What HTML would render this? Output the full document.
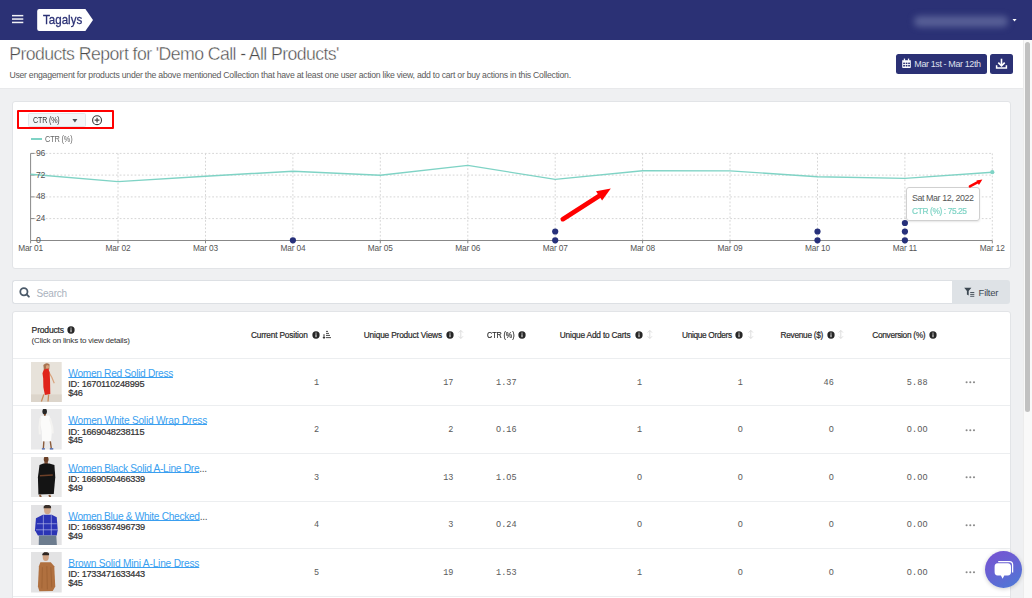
<!DOCTYPE html>
<html><head><meta charset="utf-8">
<style>
*{box-sizing:border-box;margin:0;padding:0}
html,body{width:1032px;height:598px;overflow:hidden;background:#eff0f2;font-family:"Liberation Sans",sans-serif;color:#333}
.a{position:absolute}
.t{position:absolute;white-space:nowrap;line-height:1}
.card{position:absolute;background:#fff;border:1px solid #e2e4e7;border-radius:3px}
.mono{font-family:"Liberation Mono",monospace;color:#5a5a5a}
</style></head><body>
<div class="a" style="left:0;top:0;width:1032px;height:39.5px;background:#2b3175"></div>
<svg class="a" style="left:10px;top:12px" width="16" height="14" viewBox="10 12 16 14"><g fill="#f2f2f6"><rect x="12" y="14.9" width="11.3" height="1.5"/><rect x="12" y="18.3" width="11.3" height="1.5"/><rect x="12" y="21.7" width="11.3" height="1.5"/></g></svg>
<svg class="a" style="left:0;top:0" width="100" height="40" viewBox="0 0 100 40"><path d="M39.2 8.9 H85.4 L93 19.9 L85.4 30.9 H39.2 Q37.2 30.9 37.2 28.9 V10.9 Q37.2 8.9 39.2 8.9 Z" fill="#fff"/></svg>
<div class="t" style="left:42.6px;top:12.69px;font-size:13.3px;transform:scaleX(0.87);transform-origin:0 0;color:#2b3175;letter-spacing:0px;-webkit-text-stroke:0.3px #2b3175">Tagalys</div>
<div class="a" style="left:914px;top:15.5px;width:94px;height:11px;background:#575f96;border-radius:5px;filter:blur(3px)"></div>
<svg class="a" style="left:1010px;top:16px" width="10" height="8"><path d="M2.5 3 L6.6 3 L4.55 5.4 Z" fill="#fff"/></svg>
<div class="a" style="left:0;top:39.5px;width:1023px;height:49px;background:#fff;border-bottom:1px solid #e8e9eb"></div>
<div class="t" style="left:9.3px;top:46.44px;font-size:17.7px;color:#4a4a4a;letter-spacing:-0.59px;-webkit-text-stroke:0.4px #fff">Products Report for 'Demo Call - All Products'</div>
<div class="t" style="left:9.4px;top:71.12px;font-size:8.7px;color:#5a5a5a;letter-spacing:-0.255px">User engagement for products under the above mentioned Collection that have at least one user action like view, add to cart or buy actions in this Collection.</div>
<div class="a" style="left:896px;top:54px;width:91px;height:20px;background:#2b3175;border-radius:2.5px"></div>
<div class="a" style="left:990.4px;top:54px;width:22.5px;height:20px;background:#2b3175;border-radius:2.5px"></div>
<svg class="a" style="left:900px;top:57px" width="14" height="13" viewBox="900 57 14 13">
<path d="M902.2 60.3 H910.8 V67.2 Q910.8 68 910 68 H903 Q902.2 68 902.2 67.2 Z" fill="#fff"/>
<rect x="903.8" y="58.6" width="1.3" height="2.2" fill="#fff"/><rect x="907.9" y="58.6" width="1.3" height="2.2" fill="#fff"/>
<g fill="#2b3175"><rect x="903.2" y="62.6" width="1.7" height="1.5"/><rect x="905.7" y="62.6" width="1.7" height="1.5"/><rect x="908.2" y="62.6" width="1.7" height="1.5"/>
<rect x="903.2" y="65" width="1.7" height="1.5"/><rect x="905.7" y="65" width="1.7" height="1.5"/><rect x="908.2" y="65" width="1.7" height="1.5"/></g>
</svg>
<div class="t" style="left:914.3px;top:59.97px;font-size:9px;color:#dfe0ec;letter-spacing:-0.4px">Mar 1st - Mar 12th</div>
<svg class="a" style="left:994px;top:57px" width="15" height="14" viewBox="994 57 15 14">
<path d="M1001.5 58.7 V65" stroke="#fff" stroke-width="1.6" fill="none"/>
<path d="M998.3 62.6 L1001.5 65.8 L1004.7 62.6" stroke="#fff" stroke-width="1.6" fill="none"/>
<path d="M996.6 65.2 V68.1 H1006.4 V65.2" stroke="#fff" stroke-width="1.5" fill="none"/>
</svg>
<div class="card" style="left:12px;top:100.6px;width:998.5px;height:168px"></div>
<div class="a" style="left:17.2px;top:109.7px;width:96.8px;height:19.7px;border:2px solid #f00;border-radius:1px"></div>
<div class="a" style="left:27.9px;top:113.3px;width:57.8px;height:13.3px;background:#f3f6f8;border:1px solid #e2e5e9;border-radius:1.5px"></div>
<div class="t" style="left:33.3px;top:115.94px;font-size:8.6px;transform:scaleX(0.83);transform-origin:0 0;color:#333;letter-spacing:-0.2px">CTR (%)</div>
<svg class="a" style="left:70px;top:116px" width="10" height="8"><path d="M2.4 3.1 L7.4 3.1 L4.9 6.4 Z" fill="#4a4f57"/></svg>
<svg class="a" style="left:90px;top:113px" width="14" height="14" viewBox="90 113 14 14"><circle cx="97.05" cy="120.2" r="4.45" stroke="#3a3a3a" stroke-width="1.1" fill="none"/><path d="M97.05 117.8 V122.6 M94.65 120.2 H99.45" stroke="#444" stroke-width="1.2"/></svg>
<div class="a" style="left:30.8px;top:138px;width:11.2px;height:2px;background:#7fd3c5"></div>
<div class="t" style="left:44.9px;top:134.82px;font-size:8.7px;transform:scaleX(0.85);transform-origin:0 0;color:#666;letter-spacing:-0.2px">CTR (%)</div>
<svg class="a" style="left:0;top:0" width="1032" height="270" viewBox="0 0 1032 270">
<path d="M34.6 153.4 H992.3" stroke="#d6d6d6" stroke-width="1" stroke-dasharray="1.8 1.9"/>
<path d="M34.6 175.1 H992.3" stroke="#d6d6d6" stroke-width="1" stroke-dasharray="1.8 1.9"/>
<path d="M34.6 196.9 H992.3" stroke="#d6d6d6" stroke-width="1" stroke-dasharray="1.8 1.9"/>
<path d="M34.6 218.6 H992.3" stroke="#d6d6d6" stroke-width="1" stroke-dasharray="1.8 1.9"/>
<path d="M118.0 153.4 V240.5" stroke="#d6d6d6" stroke-width="1" stroke-dasharray="1.8 1.9"/>
<path d="M205.5 153.4 V240.5" stroke="#d6d6d6" stroke-width="1" stroke-dasharray="1.8 1.9"/>
<path d="M292.9 153.4 V240.5" stroke="#d6d6d6" stroke-width="1" stroke-dasharray="1.8 1.9"/>
<path d="M380.3 153.4 V240.5" stroke="#d6d6d6" stroke-width="1" stroke-dasharray="1.8 1.9"/>
<path d="M467.8 153.4 V240.5" stroke="#d6d6d6" stroke-width="1" stroke-dasharray="1.8 1.9"/>
<path d="M555.2 153.4 V240.5" stroke="#d6d6d6" stroke-width="1" stroke-dasharray="1.8 1.9"/>
<path d="M642.6 153.4 V240.5" stroke="#d6d6d6" stroke-width="1" stroke-dasharray="1.8 1.9"/>
<path d="M730.0 153.4 V240.5" stroke="#d6d6d6" stroke-width="1" stroke-dasharray="1.8 1.9"/>
<path d="M817.5 153.4 V240.5" stroke="#d6d6d6" stroke-width="1" stroke-dasharray="1.8 1.9"/>
<path d="M904.9 153.4 V240.5" stroke="#d6d6d6" stroke-width="1" stroke-dasharray="1.8 1.9"/>
<path d="M992.3 153.4 V240.5" stroke="#d6d6d6" stroke-width="1" stroke-dasharray="1.8 1.9"/>
<path d="M30.6 153.4 V240.5 H992.3" stroke="#888" stroke-width="1" fill="none"/>
<path d="M30.6 153.4 H34.6" stroke="#888" stroke-width="1"/>
<path d="M30.6 175.1 H34.6" stroke="#888" stroke-width="1"/>
<path d="M30.6 196.9 H34.6" stroke="#888" stroke-width="1"/>
<path d="M30.6 218.6 H34.6" stroke="#888" stroke-width="1"/>
<path d="M30.6 240.5 V243.3" stroke="#888" stroke-width="1"/>
<path d="M118.0 240.5 V243.3" stroke="#888" stroke-width="1"/>
<path d="M205.5 240.5 V243.3" stroke="#888" stroke-width="1"/>
<path d="M292.9 240.5 V243.3" stroke="#888" stroke-width="1"/>
<path d="M380.3 240.5 V243.3" stroke="#888" stroke-width="1"/>
<path d="M467.8 240.5 V243.3" stroke="#888" stroke-width="1"/>
<path d="M555.2 240.5 V243.3" stroke="#888" stroke-width="1"/>
<path d="M642.6 240.5 V243.3" stroke="#888" stroke-width="1"/>
<path d="M730.0 240.5 V243.3" stroke="#888" stroke-width="1"/>
<path d="M817.5 240.5 V243.3" stroke="#888" stroke-width="1"/>
<path d="M904.9 240.5 V243.3" stroke="#888" stroke-width="1"/>
<path d="M992.3 240.5 V243.3" stroke="#888" stroke-width="1"/>
<path d="M30.6 174.2 L118.0 181.6 L205.5 176.2 L292.9 171.2 L380.3 175.2 L467.8 165.4 L555.2 179.4 L642.6 170.7 L730.0 170.9 L817.5 176.7 L904.9 178.4 L992.3 172.2" stroke="#7fd3c5" stroke-width="1.4" fill="none"/>
<circle cx="992.3" cy="172.2" r="2.1" fill="#7fd3c5"/>
<circle cx="292.9" cy="240.3" r="3.1" fill="#26307a"/>
<circle cx="555.2" cy="231.5" r="3.1" fill="#26307a"/>
<circle cx="555.2" cy="240.3" r="3.1" fill="#26307a"/>
<circle cx="817.5" cy="231.5" r="3.1" fill="#26307a"/>
<circle cx="817.5" cy="240.3" r="3.1" fill="#26307a"/>
<circle cx="904.9" cy="223" r="3.1" fill="#26307a"/>
<circle cx="904.9" cy="231.6" r="3.1" fill="#26307a"/>
<circle cx="904.9" cy="240.3" r="3.1" fill="#26307a"/>
</svg>
<div class="t" style="left:35.9px;top:148.92px;font-size:8.7px;color:#555;letter-spacing:-0.3px">96</div>
<div class="t" style="left:35.9px;top:170.62px;font-size:8.7px;color:#555;letter-spacing:-0.3px">72</div>
<div class="t" style="left:35.9px;top:192.42px;font-size:8.7px;color:#555;letter-spacing:-0.3px">48</div>
<div class="t" style="left:35.9px;top:214.12px;font-size:8.7px;color:#555;letter-spacing:-0.3px">24</div>
<div class="t" style="left:35.9px;top:235.82px;font-size:8.7px;color:#555;letter-spacing:-0.3px">0</div>
<div class="t" style="left:10.6px;width:40px;text-align:center;top:243.98px;font-size:8.3px;color:#555;letter-spacing:-0.15px">Mar 01</div>
<div class="t" style="left:98.0px;width:40px;text-align:center;top:243.98px;font-size:8.3px;color:#555;letter-spacing:-0.15px">Mar 02</div>
<div class="t" style="left:185.5px;width:40px;text-align:center;top:243.98px;font-size:8.3px;color:#555;letter-spacing:-0.15px">Mar 03</div>
<div class="t" style="left:272.9px;width:40px;text-align:center;top:243.98px;font-size:8.3px;color:#555;letter-spacing:-0.15px">Mar 04</div>
<div class="t" style="left:360.3px;width:40px;text-align:center;top:243.98px;font-size:8.3px;color:#555;letter-spacing:-0.15px">Mar 05</div>
<div class="t" style="left:447.8px;width:40px;text-align:center;top:243.98px;font-size:8.3px;color:#555;letter-spacing:-0.15px">Mar 06</div>
<div class="t" style="left:535.2px;width:40px;text-align:center;top:243.98px;font-size:8.3px;color:#555;letter-spacing:-0.15px">Mar 07</div>
<div class="t" style="left:622.6px;width:40px;text-align:center;top:243.98px;font-size:8.3px;color:#555;letter-spacing:-0.15px">Mar 08</div>
<div class="t" style="left:710.0px;width:40px;text-align:center;top:243.98px;font-size:8.3px;color:#555;letter-spacing:-0.15px">Mar 09</div>
<div class="t" style="left:797.5px;width:40px;text-align:center;top:243.98px;font-size:8.3px;color:#555;letter-spacing:-0.15px">Mar 10</div>
<div class="t" style="left:884.9px;width:40px;text-align:center;top:243.98px;font-size:8.3px;color:#555;letter-spacing:-0.15px">Mar 11</div>
<div class="t" style="left:972.3px;width:40px;text-align:center;top:243.98px;font-size:8.3px;color:#555;letter-spacing:-0.15px">Mar 12</div>
<div class="a" style="left:905.8px;top:187.3px;width:73.8px;height:34.1px;background:rgba(255,255,255,.96);border:1px solid #d0d0d0;border-radius:3px;box-shadow:0 1px 2px rgba(0,0,0,.1)"></div>
<div class="t" style="left:911.9px;top:193.99px;font-size:8.9px;color:#555;letter-spacing:-0.4px">Sat Mar 12, 2022</div>
<div class="t" style="left:911.9px;top:207.19px;font-size:8.9px;transform:scaleX(0.945);transform-origin:0 0;color:#7fd3c5;letter-spacing:-0.42px;-webkit-text-stroke:0.2px #7fd3c5">CTR (%) : 75.25</div>
<svg class="a" style="left:0;top:0" width="1032" height="270" viewBox="0 0 1032 270">
<path d="M562.8 219.2 L601 194.8" stroke="#f00" stroke-width="4.6" stroke-linecap="round"/>
<path d="M610.8 188.4 L596 191.3 L602.1 200.6 Z" fill="#f00"/>
<path d="M969.9 186.4 L978.3 181.9" stroke="#f00" stroke-width="2.5" stroke-linecap="round"/>
<path d="M982.4 179.6 L976.4 180.6 L978.9 185.1 Z" fill="#f00"/>
</svg>
<div class="a" style="left:12.3px;top:280.2px;width:940px;height:24.1px;background:#fff;border:1px solid #dde0e4;border-right:none;border-radius:3px 0 0 3px"></div>
<div class="a" style="left:952px;top:280.2px;width:58.4px;height:24.1px;background:#dee2e6;border-radius:0 3px 3px 0"></div>
<svg class="a" style="left:17px;top:285px" width="15" height="15" viewBox="17 285 15 15"><circle cx="23.9" cy="291.7" r="3.6" stroke="#4b5a69" stroke-width="1.8" fill="none"/><path d="M26.6 294.4 L28.9 296.7" stroke="#4b5a69" stroke-width="1.9" stroke-linecap="round"/></svg>
<div class="t" style="left:36.5px;top:288.81px;font-size:10px;color:#aab2bd;letter-spacing:-0.2px">Search</div>
<svg class="a" style="left:962px;top:286px" width="14" height="12" viewBox="962 286 14 12">
<path d="M964.2 287.8 H971.4 L968.7 291 V295.6 L966.9 294.6 V291 Z" fill="#3d4852"/>
<rect x="970.2" y="292" width="4.1" height="0.9" fill="#3d4852"/><rect x="970.2" y="293.9" width="4.1" height="0.9" fill="#3d4852"/><rect x="970.2" y="295.8" width="4.1" height="0.9" fill="#3d4852"/>
</svg>
<div class="t" style="left:978.6px;top:287.79px;font-size:9.5px;color:#3d4852;letter-spacing:-0.25px">Filter</div>
<div class="card" style="left:12px;top:311.3px;width:998.5px;height:320px"></div>
<div class="t" style="left:31.6px;top:325.54px;font-size:8.6px;color:#2a2a2a;letter-spacing:-0.2px;-webkit-text-stroke:0.2px #2a2a2a">Products</div>
<svg class="a" style="left:65.55px;top:324.8px" width="10" height="10" viewBox="65.55 324.8 10 10"><circle cx="70.55" cy="329.8" r="3.65" fill="#262626"/><path d="M70.55 329.1 V332.0" stroke="#fff" stroke-width="0.95"/><circle cx="70.55" cy="327.90000000000003" r="0.6" fill="#fff"/></svg>
<div class="t" style="left:31.6px;top:336.63px;font-size:8px;color:#333;letter-spacing:-0.2px">(Click on links to view details)</div>
<div class="t" style="left:250.9px;top:331.18px;font-size:8.3px;color:#2a2a2a;letter-spacing:-0.17px;-webkit-text-stroke:0.2px #2a2a2a">Current Position</div>
<svg class="a" style="left:310.65px;top:329.8px" width="10" height="10" viewBox="310.65 329.8 10 10"><circle cx="315.65" cy="334.8" r="3.65" fill="#262626"/><path d="M315.65 334.1 V337.0" stroke="#fff" stroke-width="0.95"/><circle cx="315.65" cy="332.90000000000003" r="0.6" fill="#fff"/></svg>
<div class="t" style="left:363.8px;top:331.18px;font-size:8.3px;color:#2a2a2a;letter-spacing:-0.17px;-webkit-text-stroke:0.2px #2a2a2a">Unique Product Views</div>
<svg class="a" style="left:444.6px;top:329.8px" width="10" height="10" viewBox="444.6 329.8 10 10"><circle cx="449.6" cy="334.8" r="3.65" fill="#262626"/><path d="M449.6 334.1 V337.0" stroke="#fff" stroke-width="0.95"/><circle cx="449.6" cy="332.90000000000003" r="0.6" fill="#fff"/></svg>
<svg class="a" style="left:456.1px;top:328px" width="10" height="13" viewBox="456.1 328 10 13"><path d="M460.90000000000003 330.6 V338.3 M458.70000000000005 332.6 L460.90000000000003 330.4 L463.1 332.6 M458.70000000000005 336.3 L460.90000000000003 338.5 L463.1 336.3" stroke="#d9d9d9" stroke-width="0.9" fill="none"/></svg>
<div class="t" style="left:487px;top:331.18px;font-size:8.3px;transform:scaleX(0.87);transform-origin:0 0;color:#2a2a2a;letter-spacing:-0.1px;-webkit-text-stroke:0.2px #2a2a2a">CTR (%)</div>
<svg class="a" style="left:517.1px;top:329.8px" width="10" height="10" viewBox="517.1 329.8 10 10"><circle cx="522.1" cy="334.8" r="3.65" fill="#262626"/><path d="M522.1 334.1 V337.0" stroke="#fff" stroke-width="0.95"/><circle cx="522.1" cy="332.90000000000003" r="0.6" fill="#fff"/></svg>
<div class="t" style="left:559.8px;top:331.18px;font-size:8.3px;color:#2a2a2a;letter-spacing:-0.19px;-webkit-text-stroke:0.2px #2a2a2a">Unique Add to Carts</div>
<svg class="a" style="left:633.7px;top:329.8px" width="10" height="10" viewBox="633.7 329.8 10 10"><circle cx="638.7" cy="334.8" r="3.65" fill="#262626"/><path d="M638.7 334.1 V337.0" stroke="#fff" stroke-width="0.95"/><circle cx="638.7" cy="332.90000000000003" r="0.6" fill="#fff"/></svg>
<svg class="a" style="left:645.1px;top:328px" width="10" height="13" viewBox="645.1 328 10 13"><path d="M649.9 330.6 V338.3 M647.6999999999999 332.6 L649.9 330.4 L652.1 332.6 M647.6999999999999 336.3 L649.9 338.5 L652.1 336.3" stroke="#d9d9d9" stroke-width="0.9" fill="none"/></svg>
<div class="t" style="left:682px;top:331.18px;font-size:8.3px;color:#2a2a2a;letter-spacing:-0.32px;-webkit-text-stroke:0.2px #2a2a2a">Unique Orders</div>
<svg class="a" style="left:734.1px;top:329.8px" width="10" height="10" viewBox="734.1 329.8 10 10"><circle cx="739.1" cy="334.8" r="3.65" fill="#262626"/><path d="M739.1 334.1 V337.0" stroke="#fff" stroke-width="0.95"/><circle cx="739.1" cy="332.90000000000003" r="0.6" fill="#fff"/></svg>
<svg class="a" style="left:746px;top:328px" width="10" height="13" viewBox="746 328 10 13"><path d="M750.8 330.6 V338.3 M748.5999999999999 332.6 L750.8 330.4 L753.0 332.6 M748.5999999999999 336.3 L750.8 338.5 L753.0 336.3" stroke="#d9d9d9" stroke-width="0.9" fill="none"/></svg>
<div class="t" style="left:780.6px;top:331.18px;font-size:8.3px;color:#2a2a2a;letter-spacing:-0.3px;-webkit-text-stroke:0.2px #2a2a2a">Revenue ($)</div>
<svg class="a" style="left:825.6px;top:329.8px" width="10" height="10" viewBox="825.6 329.8 10 10"><circle cx="830.6" cy="334.8" r="3.65" fill="#262626"/><path d="M830.6 334.1 V337.0" stroke="#fff" stroke-width="0.95"/><circle cx="830.6" cy="332.90000000000003" r="0.6" fill="#fff"/></svg>
<svg class="a" style="left:836.2px;top:328px" width="10" height="13" viewBox="836.2 328 10 13"><path d="M841.0 330.6 V338.3 M838.8 332.6 L841.0 330.4 L843.2 332.6 M838.8 336.3 L841.0 338.5 L843.2 336.3" stroke="#d9d9d9" stroke-width="0.9" fill="none"/></svg>
<div class="t" style="left:872.2px;top:331.18px;font-size:8.3px;color:#2a2a2a;letter-spacing:-0.29px;-webkit-text-stroke:0.2px #2a2a2a">Conversion (%)</div>
<svg class="a" style="left:927.6px;top:329.8px" width="10" height="10" viewBox="927.6 329.8 10 10"><circle cx="932.6" cy="334.8" r="3.65" fill="#262626"/><path d="M932.6 334.1 V337.0" stroke="#fff" stroke-width="0.95"/><circle cx="932.6" cy="332.90000000000003" r="0.6" fill="#fff"/></svg>
<svg class="a" style="left:320px;top:329px" width="13" height="11" viewBox="320 329 13 11"><path d="M324 334.2 V338.2" stroke="#333" stroke-width="1"/><path d="M322.5 337 L324 339 L325.5 337 Z" fill="#333"/><g fill="#333"><rect x="326" y="330.9" width="2" height="0.9"/><rect x="326" y="332.9" width="3" height="0.9"/><rect x="326" y="334.9" width="4" height="0.9"/><rect x="326" y="337.2" width="5" height="0.9"/></g></svg>
<div class="a" style="left:13px;top:358.3px;width:996.5px;height:1px;background:#eceef0"></div>
<svg class="a" style="left:31.1px;top:361.7px" width="30.7" height="40.5" viewBox="0 0 31 40" preserveAspectRatio="none"><rect width="31" height="40" fill="#e7e2da"/><rect y="32" width="31" height="8" fill="#dcd5cb"/><path d="M12.5 3 Q15.5 -0.5 18.8 2.5 L18.5 7.5 L13 8 Z" fill="#a87450"/><ellipse cx="16.6" cy="5" rx="1.6" ry="2" fill="#d9a27c"/><path d="M17.4 9 L21 15 L23.5 21" stroke="#d9a27c" stroke-width="1.2" fill="none"/><path d="M13 7.5 L17.5 6.5 L18.8 10 L19.2 17 L19.5 31.5 L14 32.5 L12.5 25 L12.3 16 L11.6 11 Z" fill="#e0241b"/><path d="M13 32 L10.5 39 M17.8 32 L17.2 39" stroke="#c98a5a" stroke-width="1.3"/></svg>
<div class="t" style="left:68.3px;top:368.78px;font-size:10.2px;color:#3a9ff0;letter-spacing:-0.32px"><span style="text-decoration:underline;text-underline-offset:0px;text-decoration-skip-ink:none">Women Red Solid Dress</span></div>
<div class="t" style="left:68.3px;top:379.94px;font-size:9.2px;color:#333;letter-spacing:-0.24px;-webkit-text-stroke:0.22px #333">ID: 1670110248995</div>
<div class="t" style="left:68.3px;top:388.84px;font-size:9.2px;color:#333;letter-spacing:-0.4px;-webkit-text-stroke:0.22px #333">$46</div>
<div class="t mono" style="left:219.15px;width:100px;text-align:right;top:378.50px;font-size:8.5px;letter-spacing:0.1px">1</div>
<div class="t mono" style="left:353.55px;width:100px;text-align:right;top:378.50px;font-size:8.5px;letter-spacing:0.1px">17</div>
<div class="t mono" style="left:416.75px;width:100px;text-align:right;top:378.50px;font-size:8.5px;letter-spacing:0.1px">1.37</div>
<div class="t mono" style="left:542.25px;width:100px;text-align:right;top:378.50px;font-size:8.5px;letter-spacing:0.1px">1</div>
<div class="t mono" style="left:642.85px;width:100px;text-align:right;top:378.50px;font-size:8.5px;letter-spacing:0.1px">1</div>
<div class="t mono" style="left:733.95px;width:100px;text-align:right;top:378.50px;font-size:8.5px;letter-spacing:0.1px">46</div>
<div class="t mono" style="left:827.65px;width:100px;text-align:right;top:378.50px;font-size:8.5px;letter-spacing:0.1px">5.88</div>
<svg class="a" style="left:964px;top:378.0px" width="13" height="8" viewBox="0 0 13 8"><g fill="#8a8a8a"><circle cx="2.6" cy="4.2" r="1.05"/><circle cx="6.3" cy="4.2" r="1.05"/><circle cx="10" cy="4.2" r="1.05"/></g></svg>
<div class="a" style="left:13px;top:405.3px;width:996.5px;height:1px;background:#eceef0"></div>
<svg class="a" style="left:31.1px;top:409.3px" width="30.7" height="40.5" viewBox="0 0 31 40" preserveAspectRatio="none"><rect width="31" height="40" fill="#e9e9ea"/><ellipse cx="13.8" cy="2.4" rx="2.3" ry="2.9" fill="#262626"/><path d="M13 5 L15 5 L14.8 7 L13.2 7 Z" fill="#7a4a2a"/><path d="M9.8 7 L18.5 6.5 L20.5 13 L21.2 21 L20.3 31.5 L11.2 32 L10.8 22 L9.2 14 Z" fill="#fbfbfa"/><path d="M9.5 9 L8.5 18 L9 25 M19 9 L21.5 18 L22 24" stroke="#f4f3f1" stroke-width="2" fill="none"/><path d="M13 32 L12.5 38.8 M19.5 32 L20.5 38.8" stroke="#8a5a3a" stroke-width="1.4"/><path d="M11 39.4 H14 M19 39.4 H22.5" stroke="#3b5ba8" stroke-width="1.1"/></svg>
<div class="t" style="left:68.3px;top:416.38px;font-size:10.2px;color:#3a9ff0;letter-spacing:-0.25px"><span style="text-decoration:underline;text-underline-offset:0px;text-decoration-skip-ink:none">Women White Solid Wrap Dress</span></div>
<div class="t" style="left:68.3px;top:427.54px;font-size:9.2px;color:#333;letter-spacing:-0.24px;-webkit-text-stroke:0.22px #333">ID: 1669048238115</div>
<div class="t" style="left:68.3px;top:436.44px;font-size:9.2px;color:#333;letter-spacing:-0.4px;-webkit-text-stroke:0.22px #333">$45</div>
<div class="t mono" style="left:219.15px;width:100px;text-align:right;top:426.10px;font-size:8.5px;letter-spacing:0.1px">2</div>
<div class="t mono" style="left:353.55px;width:100px;text-align:right;top:426.10px;font-size:8.5px;letter-spacing:0.1px">2</div>
<div class="t mono" style="left:416.75px;width:100px;text-align:right;top:426.10px;font-size:8.5px;letter-spacing:0.1px">O.16</div>
<div class="t mono" style="left:542.25px;width:100px;text-align:right;top:426.10px;font-size:8.5px;letter-spacing:0.1px">1</div>
<div class="t mono" style="left:642.85px;width:100px;text-align:right;top:426.10px;font-size:8.5px;letter-spacing:0.1px">O</div>
<div class="t mono" style="left:733.95px;width:100px;text-align:right;top:426.10px;font-size:8.5px;letter-spacing:0.1px">O</div>
<div class="t mono" style="left:827.65px;width:100px;text-align:right;top:426.10px;font-size:8.5px;letter-spacing:0.1px">O.OO</div>
<svg class="a" style="left:964px;top:425.6px" width="13" height="8" viewBox="0 0 13 8"><g fill="#8a8a8a"><circle cx="2.6" cy="4.2" r="1.05"/><circle cx="6.3" cy="4.2" r="1.05"/><circle cx="10" cy="4.2" r="1.05"/></g></svg>
<div class="a" style="left:13px;top:452.9px;width:996.5px;height:1px;background:#eceef0"></div>
<svg class="a" style="left:31.1px;top:456.9px" width="30.7" height="40.5" viewBox="0 0 31 40" preserveAspectRatio="none"><rect width="31" height="40" fill="#e8e8e8"/><ellipse cx="15.3" cy="2.3" rx="2.4" ry="3.2" fill="#6a4028"/><path d="M13.5 5 H17 V7 H13.5 Z" fill="#7a4a30"/><path d="M8.6 8 L12.5 6.5 H18.5 L23.7 8 L24.5 20 L23 36.5 L7.5 37 L7 20 Z" fill="#141414"/><path d="M9 18.5 L22 17.8" stroke="#6e4028" stroke-width="1.6"/><path d="M9 37.5 L10 40 M18.5 37.5 L19.5 40" stroke="#8a5a3a" stroke-width="2"/></svg>
<div class="t" style="left:68.3px;top:463.98px;font-size:10.2px;color:#3a9ff0;letter-spacing:-0.29px"><span style="text-decoration:underline;text-underline-offset:0px;text-decoration-skip-ink:none">Women Black Solid A-Line Dre</span><span style="color:#555;letter-spacing:-0.3px">...</span></div>
<div class="t" style="left:68.3px;top:475.14px;font-size:9.2px;color:#333;letter-spacing:-0.24px;-webkit-text-stroke:0.22px #333">ID: 1669050466339</div>
<div class="t" style="left:68.3px;top:484.04px;font-size:9.2px;color:#333;letter-spacing:-0.4px;-webkit-text-stroke:0.22px #333">$49</div>
<div class="t mono" style="left:219.15px;width:100px;text-align:right;top:473.70px;font-size:8.5px;letter-spacing:0.1px">3</div>
<div class="t mono" style="left:353.55px;width:100px;text-align:right;top:473.70px;font-size:8.5px;letter-spacing:0.1px">13</div>
<div class="t mono" style="left:416.75px;width:100px;text-align:right;top:473.70px;font-size:8.5px;letter-spacing:0.1px">1.O5</div>
<div class="t mono" style="left:542.25px;width:100px;text-align:right;top:473.70px;font-size:8.5px;letter-spacing:0.1px">O</div>
<div class="t mono" style="left:642.85px;width:100px;text-align:right;top:473.70px;font-size:8.5px;letter-spacing:0.1px">O</div>
<div class="t mono" style="left:733.95px;width:100px;text-align:right;top:473.70px;font-size:8.5px;letter-spacing:0.1px">O</div>
<div class="t mono" style="left:827.65px;width:100px;text-align:right;top:473.70px;font-size:8.5px;letter-spacing:0.1px">O.OO</div>
<svg class="a" style="left:964px;top:473.2px" width="13" height="8" viewBox="0 0 13 8"><g fill="#8a8a8a"><circle cx="2.6" cy="4.2" r="1.05"/><circle cx="6.3" cy="4.2" r="1.05"/><circle cx="10" cy="4.2" r="1.05"/></g></svg>
<div class="a" style="left:13px;top:500.5px;width:996.5px;height:1px;background:#eceef0"></div>
<svg class="a" style="left:31.1px;top:504.5px" width="30.7" height="40.5" viewBox="0 0 31 40" preserveAspectRatio="none"><rect width="31" height="40" fill="#e2e2e4"/><ellipse cx="16.6" cy="4.6" rx="3.4" ry="4.6" fill="#cfa68a"/><path d="M12.8 3.5 Q16.5 -2 20.3 3 L20 1 Q16.5 -1.5 13 1 Z" fill="#333"/><path d="M13 1.5 Q16.6 -1.2 20.2 1.5 L20.3 3.2 L13 3.2 Z" fill="#3a302a"/><path d="M5 13 L12 9.7 H21 L26 12 L27 25 L26 30 L7 30 L4 25 Z" fill="#2b34b5"/><path d="M6 18.5 H26 M5 24.5 H27 M12.5 10 V30 M20.5 10 V30" stroke="#c0c4ee" stroke-width="0.6"/><path d="M8 30 L25.5 30 L26.2 40 L7.8 40 Z" fill="#6c7c8e"/></svg>
<div class="t" style="left:68.3px;top:511.58px;font-size:10.2px;color:#3a9ff0;letter-spacing:-0.32px"><span style="text-decoration:underline;text-underline-offset:0px;text-decoration-skip-ink:none">Women Blue &amp; White Checked</span><span style="color:#555;letter-spacing:-0.3px">...</span></div>
<div class="t" style="left:68.3px;top:522.74px;font-size:9.2px;color:#333;letter-spacing:-0.24px;-webkit-text-stroke:0.22px #333">ID: 1669367496739</div>
<div class="t" style="left:68.3px;top:531.64px;font-size:9.2px;color:#333;letter-spacing:-0.4px;-webkit-text-stroke:0.22px #333">$49</div>
<div class="t mono" style="left:219.15px;width:100px;text-align:right;top:521.30px;font-size:8.5px;letter-spacing:0.1px">4</div>
<div class="t mono" style="left:353.55px;width:100px;text-align:right;top:521.30px;font-size:8.5px;letter-spacing:0.1px">3</div>
<div class="t mono" style="left:416.75px;width:100px;text-align:right;top:521.30px;font-size:8.5px;letter-spacing:0.1px">O.24</div>
<div class="t mono" style="left:542.25px;width:100px;text-align:right;top:521.30px;font-size:8.5px;letter-spacing:0.1px">O</div>
<div class="t mono" style="left:642.85px;width:100px;text-align:right;top:521.30px;font-size:8.5px;letter-spacing:0.1px">O</div>
<div class="t mono" style="left:733.95px;width:100px;text-align:right;top:521.30px;font-size:8.5px;letter-spacing:0.1px">O</div>
<div class="t mono" style="left:827.65px;width:100px;text-align:right;top:521.30px;font-size:8.5px;letter-spacing:0.1px">O.OO</div>
<svg class="a" style="left:964px;top:520.8px" width="13" height="8" viewBox="0 0 13 8"><g fill="#8a8a8a"><circle cx="2.6" cy="4.2" r="1.05"/><circle cx="6.3" cy="4.2" r="1.05"/><circle cx="10" cy="4.2" r="1.05"/></g></svg>
<div class="a" style="left:13px;top:548.1px;width:996.5px;height:1px;background:#eceef0"></div>
<svg class="a" style="left:31.1px;top:552.1px" width="30.7" height="40.5" viewBox="0 0 31 40" preserveAspectRatio="none"><rect width="31" height="40" fill="#e3e3e4"/><ellipse cx="14.9" cy="4.6" rx="3.1" ry="4.2" fill="#cfa283"/><path d="M11.6 3.5 Q14.5 -2 18.3 2.5 L18.2 1.2 Q14.8 -1.5 11.8 1.5 Z" fill="#2c2420"/><path d="M11.6 2 Q15 -1.2 18.2 2 L18.2 3.2 L11.6 3.2 Z" fill="#2c2420"/><path d="M9.5 10.2 L20 10 L23.5 14 L24.5 34 L22 38.5 L8.5 38.7 L7 34 L8 14 Z" fill="#b0703f"/><path d="M11.5 15 L11 36 M16 14 L16.5 37 M20 15 L21 35" stroke="#955a2e" stroke-width="0.6"/></svg>
<div class="t" style="left:68.3px;top:559.18px;font-size:10.2px;color:#3a9ff0;letter-spacing:-0.21px"><span style="text-decoration:underline;text-underline-offset:0px;text-decoration-skip-ink:none">Brown Solid Mini A-Line Dress</span></div>
<div class="t" style="left:68.3px;top:570.34px;font-size:9.2px;color:#333;letter-spacing:-0.24px;-webkit-text-stroke:0.22px #333">ID: 1733471633443</div>
<div class="t" style="left:68.3px;top:579.24px;font-size:9.2px;color:#333;letter-spacing:-0.4px;-webkit-text-stroke:0.22px #333">$45</div>
<div class="t mono" style="left:219.15px;width:100px;text-align:right;top:568.90px;font-size:8.5px;letter-spacing:0.1px">5</div>
<div class="t mono" style="left:353.55px;width:100px;text-align:right;top:568.90px;font-size:8.5px;letter-spacing:0.1px">19</div>
<div class="t mono" style="left:416.75px;width:100px;text-align:right;top:568.90px;font-size:8.5px;letter-spacing:0.1px">1.53</div>
<div class="t mono" style="left:542.25px;width:100px;text-align:right;top:568.90px;font-size:8.5px;letter-spacing:0.1px">1</div>
<div class="t mono" style="left:642.85px;width:100px;text-align:right;top:568.90px;font-size:8.5px;letter-spacing:0.1px">O</div>
<div class="t mono" style="left:733.95px;width:100px;text-align:right;top:568.90px;font-size:8.5px;letter-spacing:0.1px">O</div>
<div class="t mono" style="left:827.65px;width:100px;text-align:right;top:568.90px;font-size:8.5px;letter-spacing:0.1px">O.OO</div>
<svg class="a" style="left:964px;top:568.4px" width="13" height="8" viewBox="0 0 13 8"><g fill="#8a8a8a"><circle cx="2.6" cy="4.2" r="1.05"/><circle cx="6.3" cy="4.2" r="1.05"/><circle cx="10" cy="4.2" r="1.05"/></g></svg>
<div class="a" style="left:13px;top:595.7px;width:996.5px;height:1px;background:#eceef0"></div>
<div class="a" style="left:1022.8px;top:39.5px;width:9.2px;height:560px;background:#f9f9f9;border-left:1px solid #ececec"></div>
<div class="a" style="left:1025px;top:42px;width:5px;height:370px;background:#c1c1c1;border-radius:2.5px"></div>
<div class="a" style="left:985.2px;top:551.1px;width:37px;height:37px;border-radius:50%;background:linear-gradient(150deg,#7751d2 0%,#6a60d3 40%,#4a7bd6 100%);box-shadow:0 1px 4px rgba(0,0,0,.2)"></div>
<svg class="a" style="left:990px;top:557px" width="26" height="26" viewBox="990 557 26 26"><path d="M998.2 561.6 H1009.5 Q1012.6 561.6 1012.6 564.8 V572.5" stroke="#fff" stroke-width="1.3" fill="none"/><path d="M997.5 563.3 H1007.8 Q1011 563.3 1011 567 V571.8 Q1011 575.6 1007.8 575.6 H1004.3 L1002.6 578.8 L1000.9 575.6 H997.5 Q994.6 575.6 994.6 571.8 V567 Q994.6 563.3 997.5 563.3 Z" fill="#fff"/></svg>
</body></html>
